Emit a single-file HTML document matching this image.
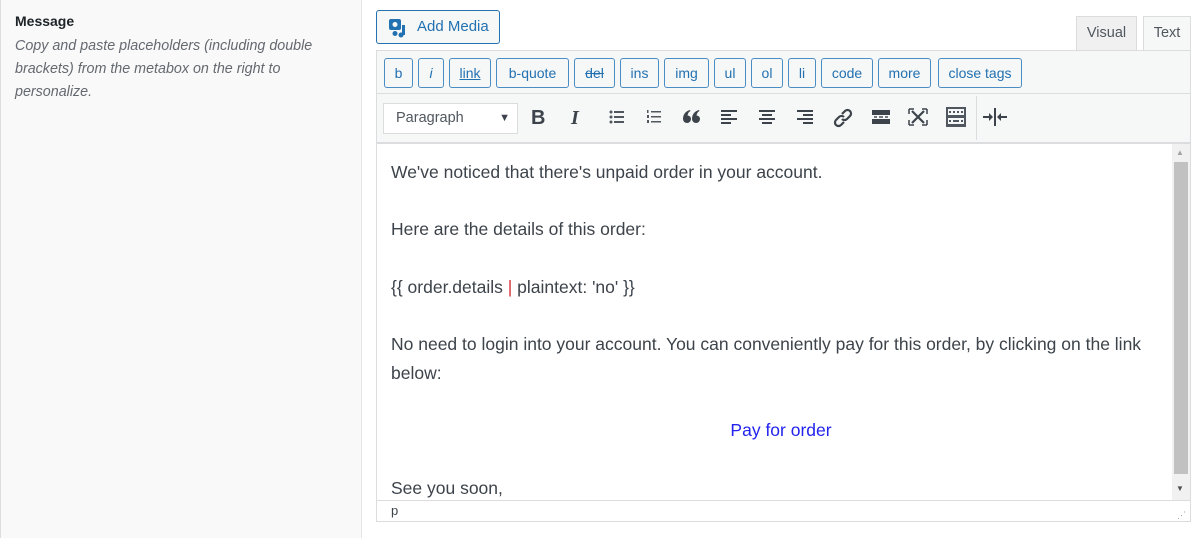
<!DOCTYPE html>
<html><head><style>
*{box-sizing:border-box;margin:0;padding:0}
body{width:1200px;height:538px;background:#fff;font-family:"Liberation Sans",sans-serif;position:relative;overflow:hidden;color:#3c434a}
.left{position:absolute;left:0;top:0;width:362px;height:538px;background:#f9f9f9;border-right:1px solid #e5e5e5;border-left:1px solid #ddd}
.left h4{position:absolute;left:14px;top:13px;font-size:14px;font-weight:bold;color:#1d2327}
.left p{position:absolute;left:14px;top:35px;width:322px;font-size:14.3px;font-style:italic;color:#646970;line-height:23px}
.am{position:absolute;left:376px;top:10px;width:124px;height:34px;border:1px solid #2271b1;border-radius:3px;background:#f6f7f7;color:#2271b1;font-size:15px;line-height:32px;padding-left:40px}
.tab{position:absolute;top:16px;height:35px;border:1px solid #dcdcde;font-size:14.5px;line-height:33px;text-align:center;color:#50575e}
.box{position:absolute;left:376px;top:50px;width:815px;height:472px;border:1px solid #dcdcde}
.qt{position:absolute;left:0;top:0;width:813px;height:43px;background:#f6f7f7;border-bottom:1px solid #dcdcde}
.b{position:absolute;top:7px;height:30px;border:1px solid #4a8cc4;border-radius:3px;color:#2271b1;font-size:14px;line-height:28px;text-align:center;background:#f6f7f7}
.tb{position:absolute;left:0;top:43px;width:813px;height:50px;background:#f6f7f7;border-bottom:2px solid #dcdcde}
.sel{position:absolute;left:6px;top:9px;width:135px;height:31px;background:#fff;border:1px solid #dcdcde;font-size:14.5px;line-height:29px;padding-left:12px;color:#50575e}
.ic{position:absolute;top:14px}
.content{position:absolute;left:14px;top:107px;width:780px;font-size:17.5px;line-height:28.7px;color:#3c434a}
.sb{position:absolute;left:795px;top:93px;width:18px;height:356px;background:#f1f1f1}
.st{position:absolute;left:0;top:449px;width:813px;height:21px;border-top:1px solid #dcdcde;font-size:13px;padding-left:14px;line-height:20px;color:#3c434a}
</style></head><body>
<div class="left"><h4>Message</h4><p>Copy and paste placeholders (including double brackets) from the metabox on the right to personalize.</p></div>
<div class="am"><svg style="position:absolute;left:11px;top:7px" width="20" height="20" viewBox="0 0 20 20" fill="#2271b1"><rect x="1" y="1" width="12" height="11" rx="2"/><circle cx="7" cy="6.5" r="2.5" fill="#f6f7f7"/><rect x="14" y="7" width="3" height="10"/><circle cx="13" cy="17" r="2.5"/><circle cx="7" cy="15.5" r="2.5"/></svg>Add Media</div>
<div class="tab" style="left:1076px;width:61px;background:#f0f0f1">Visual</div>
<div class="tab" style="left:1143px;width:48px;background:#f6f7f7;border-bottom:none;height:35px">Text</div>
<div class="box">
<div class="qt">
<div class="b" style="left:7px;width:29px">b</div>
<div class="b" style="left:41px;width:26px;font-style:italic">i</div>
<div class="b" style="left:72px;width:42px;text-decoration:underline">link</div>
<div class="b" style="left:119px;width:73px">b-quote</div>
<div class="b" style="left:197px;width:41px;text-decoration:line-through">del</div>
<div class="b" style="left:243px;width:39px">ins</div>
<div class="b" style="left:287px;width:45px">img</div>
<div class="b" style="left:337px;width:32px">ul</div>
<div class="b" style="left:374px;width:32px">ol</div>
<div class="b" style="left:411px;width:28px">li</div>
<div class="b" style="left:444px;width:52px">code</div>
<div class="b" style="left:501px;width:53px">more</div>
<div class="b" style="left:561px;width:84px">close tags</div>
</div>
<div class="tb">
<div class="sel">Paragraph<span style="position:absolute;right:7px;top:0;font-size:11px;color:#3c434a">▼</span></div>
<div class="ic" style="left:154px;top:13px;font-size:20px;font-weight:bold">B</div>
<div class="ic" style="left:194px;top:13px;font-size:20px;font-style:italic;font-family:'Liberation Serif',serif;font-weight:bold">I</div>
<svg class="ic" style="left:231px" width="18" height="18" viewBox="0 0 18 18" fill="#50575e"><circle cx="3" cy="4" r="1.5"/><circle cx="3" cy="9" r="1.5"/><circle cx="3" cy="14" r="1.5"/><rect x="6" y="3" width="10" height="2"/><rect x="6" y="8" width="10" height="2"/><rect x="6" y="13" width="10" height="2"/></svg>
<svg class="ic" style="left:268px" width="18" height="18" viewBox="0 0 18 18" fill="#50575e"><rect x="2" y="2" width="1.5" height="3"/><rect x="2" y="7" width="2" height="3"/><rect x="2" y="12" width="2" height="3"/><rect x="6" y="3" width="10" height="1.5"/><rect x="6" y="8" width="10" height="1.5"/><rect x="6" y="13" width="10" height="1.5"/></svg>
<svg class="ic" style="left:305px;top:16px" width="18" height="14" viewBox="0 0 18 14" fill="#3c434a"><path d="M1 9a4 4 0 108 0c0-2-1.5-3.5-3.5-3.5C6 3 7 1.5 8.5 1L8 0C4 1 1 4 1 9zM10 9a4 4 0 108 0c0-2-1.5-3.5-3.5-3.5C15 3 16 1.5 17.5 1L17 0C13 1 10 4 10 9z"/></svg>
<svg class="ic" style="left:343px" width="18" height="18" viewBox="0 0 18 18" fill="#3c434a"><rect x="1" y="2" width="16" height="2"/><rect x="1" y="6" width="10" height="2"/><rect x="1" y="10" width="16" height="2"/><rect x="1" y="14" width="10" height="2"/></svg>
<svg class="ic" style="left:381px" width="18" height="18" viewBox="0 0 18 18" fill="#3c434a"><rect x="1" y="2" width="16" height="2"/><rect x="4" y="6" width="10" height="2"/><rect x="1" y="10" width="16" height="2"/><rect x="4" y="14" width="10" height="2"/></svg>
<svg class="ic" style="left:419px" width="18" height="18" viewBox="0 0 18 18" fill="#3c434a"><rect x="1" y="2" width="16" height="2"/><rect x="7" y="6" width="10" height="2"/><rect x="1" y="10" width="16" height="2"/><rect x="7" y="14" width="10" height="2"/></svg>
<svg class="ic" style="left:456px" width="20" height="20" viewBox="0 0 20 20" fill="none" stroke="#3c434a" stroke-width="2.2"><path d="M9 6l3-3a3.5 3.5 0 015 5l-3 3a3.5 3.5 0 01-5 0"/><path d="M11 14l-3 3a3.5 3.5 0 01-5-5l3-3a3.5 3.5 0 015 0"/></svg>
<svg class="ic" style="left:494px" width="20" height="18" viewBox="0 0 20 18" fill="#3c434a"><rect x="1" y="2" width="18" height="5"/><rect x="1" y="11" width="18" height="5"/><rect x="3" y="8.3" width="3" height="1.4"/><rect x="8" y="8.3" width="4" height="1.4"/><rect x="14" y="8.3" width="3" height="1.4"/></svg>
<svg class="ic" style="left:531px" width="20" height="18" viewBox="0 0 20 18" fill="none" stroke="#3c434a" stroke-width="2.2"><path d="M4 3l12 12M16 3L4 15"/><path d="M1 1h5M1 1v5M19 1h-5M19 1v5M1 17h5M1 17v-5M19 17h-5M19 17v-5" stroke-width="1.5"/></svg>
<svg class="ic" style="left:568px;top:12px" width="22" height="22" viewBox="0 0 22 22" fill="#50575e"><rect x="1" y="1" width="20" height="20" fill="#50575e"/><rect x="3" y="3" width="16" height="6" fill="#f6f7f7"/><rect x="3" y="12" width="16" height="6" fill="#f6f7f7"/><path d="M4 5h2v2H4zM8 5h2v2H8zM12 5h2v2h-2zM16 5h2v2h-2zM4 14h2v2H4zM8 14h6v2H8zM16 14h2v2h-2z"/></svg>
<div style="position:absolute;left:599px;top:2px;width:1px;height:44px;background:#dcdcde"></div>
<svg class="ic" style="left:604px" width="28" height="18" viewBox="0 0 28 18" fill="#3c434a"><rect x="13" y="0" width="2" height="18"/><rect x="2" y="8" width="7" height="2"/><path d="M8 5l4 4-4 4z"/><rect x="19" y="8" width="7" height="2"/><path d="M20 5l-4 4 4 4z"/></svg>
</div>
<div class="content">
<p>We've noticed that there's unpaid order in your account.</p><p>&nbsp;</p>
<p>Here are the details of this order:</p><p>&nbsp;</p>
<p>{{ order.details <span style="color:#d63638">|</span> plaintext: 'no' }}</p><p>&nbsp;</p>
<p>No need to login into your account. You can conveniently pay for this order, by clicking on the link below:</p><p>&nbsp;</p>
<p style="text-align:center;color:#2323ee">Pay for order</p><p>&nbsp;</p>
<p>See you soon,</p>
</div>
<div class="sb"><div style="position:absolute;left:2px;top:18px;width:14px;height:312px;background:#c1c1c1"></div>
<div style="position:absolute;left:4px;top:4px;font-size:8px;color:#a3a3a3">▲</div>
<div style="position:absolute;left:4px;top:340px;font-size:8px;color:#505050">▼</div></div>
<div class="st">p<span style="position:absolute;right:4px;top:4px;font-size:9px;color:#999">⋰</span></div>
</div>
</body></html>
